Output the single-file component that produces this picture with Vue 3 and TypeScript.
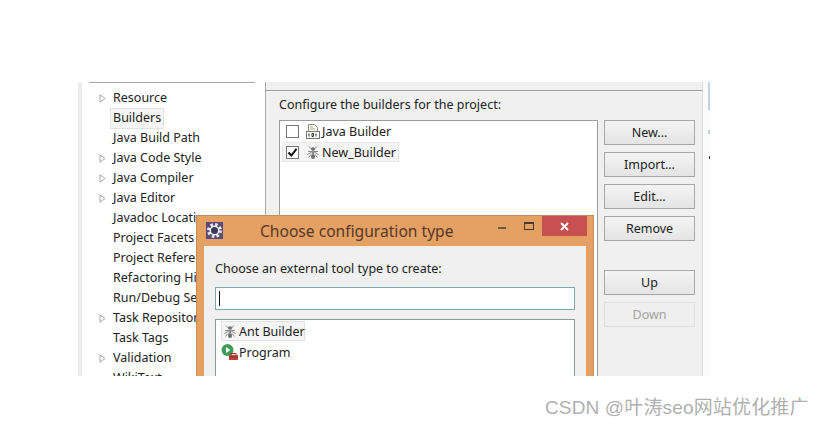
<script setup lang="ts">
const treeItems = [
  { label: 'Resource', arrow: true },
  { label: 'Builders', selected: true },
  { label: 'Java Build Path' },
  { label: 'Java Code Style', arrow: true },
  { label: 'Java Compiler', arrow: true },
  { label: 'Java Editor', arrow: true },
  { label: 'Javadoc Location' },
  { label: 'Project Facets' },
  { label: 'Project References' },
  { label: 'Refactoring History' },
  { label: 'Run/Debug Settings' },
  { label: 'Task Repository', arrow: true },
  { label: 'Task Tags' },
  { label: 'Validation', arrow: true },
  { label: 'WikiText' },
]
</script>

<template>
  <div class="page">
    <div class="shot">
      <aside class="sidebar">
        <ul class="tree">
          <li v-for="item in treeItems" :key="item.label" class="tree-row">
            <svg v-if="item.arrow" class="arrow" width="7" height="9" viewBox="0 0 7 9">
              <path d="M1 .8 6 4.5 1 8.2Z" fill="#fff" stroke="#a6a6a6" />
            </svg>
            <span v-else class="arrow" />
            <span class="tree-label" :class="{ selected: item.selected }">{{ item.label }}</span>
          </li>
        </ul>
      </aside>

      <main class="panel">
        <div class="panel-body">
          <p class="caption">Configure the builders for the project:</p>
          <div class="panel-row">
            <div class="builders">
              <div class="builder">
                <span class="check" />
                <svg class="icon" width="14" height="15" viewBox="0 0 14 15">
                  <path d="M2.5 .5h6l3 3v4h-9z" fill="#fff" stroke="#8a8a7a" />
                  <path d="M4 3h3M4 5h5" stroke="#b5a96a" />
                  <rect x=".5" y="7.5" width="13" height="7" fill="#fff" stroke="#77776c" />
                  <path d="M3 9.5v3M6 9.5v3h1.500v-3zM10 9.500v3" stroke="#333" fill="none" />
                </svg>
                <span>Java Builder</span>
              </div>
              <div class="builder active">
                <span class="check">
                  <svg width="11" height="11" viewBox="0 0 11 11">
                    <path d="M1.500 5.500 4.300 8.500 9.500 1.800" fill="none" stroke="#111" stroke-width="2" />
                  </svg>
                </span>
                <svg class="icon ant" width="14" height="15" viewBox="0 0 14 15">
                  <g stroke="#8c8c8c" fill="none">
                    <path d="M3 1.500 5.500 4M11 1.500 8.500 4M2 6.500h10M2.500 12.500 5 9.500M11.500 12.500 9 9.500M1.500 9.500 5 7.500M12.500 9.500 9 7.500" />
                  </g>
                  <ellipse cx="7" cy="4" rx="2" ry="1.800" fill="#6e6e6e" />
                  <ellipse cx="7" cy="7.500" rx="1.600" ry="1.800" fill="#8a8a8a" />
                  <ellipse cx="7" cy="11.500" rx="2" ry="2.500" fill="#6e6e6e" />
                </svg>
                <span>New_Builder</span>
              </div>
            </div>
            <div class="actions">
              <button class="btn">New...</button>
              <button class="btn">Import...</button>
              <button class="btn">Edit...</button>
              <button class="btn">Remove</button>
              <button class="btn up">Up</button>
              <button class="btn" disabled>Down</button>
            </div>
          </div>
        </div>
        <div class="edge">
          <span class="edge-blue" />
          <span class="edge-blue short" />
          <span class="edge-dot" />
        </div>
      </main>

      <section class="dialog">
        <header class="titlebar">
          <svg class="gear" width="17" height="17" viewBox="0 0 17 17">
            <rect width="17" height="17" fill="#5a4a78" />
            <circle cx="8.500" cy="8.500" r="6" fill="none" stroke="#e8e8e8" stroke-width="3" stroke-dasharray="2.500 2.200" />
            <circle cx="8.500" cy="8.500" r="5" fill="#f0f0f0" />
            <circle cx="8.500" cy="8.500" r="3.500" fill="#3c3a5c" />
          </svg>
          <h1 class="title">Choose configuration type</h1>
          <div class="win-buttons">
            <span class="win-btn"><i class="min" /></span>
            <span class="win-btn"><i class="max" /></span>
            <span class="win-btn close">
              <svg width="9" height="9" viewBox="0 0 9 9">
                <path d="M1 1 8 8M8 1 1 8" stroke="#fff" stroke-width="1.800" />
              </svg>
            </span>
          </div>
        </header>
        <div class="dialog-body">
          <label class="prompt">Choose an external tool type to create:</label>
          <div class="filter"><i class="caret" /></div>
          <div class="types">
            <div class="type">
              <svg class="icon" width="14" height="15" viewBox="0 0 14 15">
                <g stroke="#8c8c8c" fill="none">
                  <path d="M3 1.500 5.500 4M11 1.500 8.500 4M2 6.500h10M2.500 12.500 5 9.500M11.500 12.500 9 9.500M1.500 9.500 5 7.500M12.500 9.500 9 7.500" />
                </g>
                <ellipse cx="7" cy="4" rx="2" ry="1.800" fill="#6e6e6e" />
                <ellipse cx="7" cy="7.500" rx="1.600" ry="1.800" fill="#8a8a8a" />
                <ellipse cx="7" cy="11.500" rx="2" ry="2.500" fill="#6e6e6e" />
              </svg>
              <span>Ant Builder</span>
            </div>
            <div class="type plain">
              <svg class="icon program" width="17" height="16" viewBox="0 0 17 16">
                <circle cx="6.500" cy="6" r="6" fill="#3f9d5a" />
                <path d="M5 3 9.300 6 5 9Z" fill="#fff" />
                <path d="M8 11h9v5H8z" fill="#c8423c" />
                <path d="M10 11V9.500h5V11M8 13h9" fill="none" stroke="#8e2a28" />
              </svg>
              <span>Program</span>
            </div>
          </div>
        </div>
      </section>
    </div>
    <div class="watermark">CSDN @叶涛seo网站优化推广</div>
  </div>
</template>

<style>
html,
body {
  margin: 0;
  background: #fff;
}
</style>

<style scoped>
.page {
  position: relative;
  width: 824px;
  height: 426px;
  padding: 82px 114px 50px 78px;
  box-sizing: border-box;
  overflow: hidden;
  background: #fff;
  font-family: "Noto Sans", "Noto Sans CJK SC", sans-serif;
  font-size: 12.500px;
  color: #222;
}

.shot {
  position: relative;
  display: flex;
  height: 100%;
  overflow: hidden;
}

.sidebar {
  width: 188px;
  flex: none;
  box-sizing: border-box;
  border-left: 4px solid #ececec;
  border-right: 1px solid #a9a9a9;
  background: #fff;
}

.tree {
  list-style: none;
  margin: 0 0 0 7px;
  padding: 5px 0 0;
  width: 166px;
  border-top: 1px solid #a8a8a8;
}

.tree-row {
  display: flex;
  align-items: center;
  height: 20px;
  white-space: nowrap;
}

.arrow {
  display: block;
  width: 7px;
  height: 9px;
  margin-left: 10px;
  margin-right: 7px;
  flex: none;
}

.tree-label {
  padding: 0 2px 1px 2px;
  line-height: 18px;
  border: 1px solid transparent;
  margin-left: -3px;
}

.tree-label.selected {
  background: #f5f5f5;
  border-color: #e2e2e2;
}

.panel {
  flex: 1;
  display: flex;
  min-width: 0;
  background: #f0f0f0;
  padding-top: 8px;
}

.panel-body {
  flex: 1;
  min-width: 0;
  border-top: 1px solid #a0a0a0;
  padding: 5px 7px 0 13px;
}

.caption {
  margin: 0 0 6px;
  line-height: 18px;
}

.panel-row {
  display: flex;
  gap: 6px;
}

.builders {
  flex: 1;
  height: 280px;
  background: #fff;
  border: 1px solid #9c9c9c;
  padding: 0 2px;
  box-sizing: border-box;
}

.builder {
  display: flex;
  align-items: center;
  height: 20px;
  width: 117px;
  padding-left: 3px;
  box-sizing: border-box;
  border: 1px solid transparent;
  white-space: nowrap;
  margin-bottom: 1px;
}

.builder.active {
  background: #f5f5f5;
  border-color: #e6e6e6;
}

.check {
  display: flex;
  align-items: center;
  justify-content: center;
  width: 11px;
  height: 11px;
  margin-right: 7px;
  flex: none;
  background: #fff;
  border: 1px solid #777;
}

.icon {
  flex: none;
  margin-right: 2px;
}

.actions {
  display: flex;
  flex-direction: column;
  width: 91px;
  flex: none;
  gap: 7px;
}

.btn {
  height: 25px;
  box-sizing: border-box;
  padding: 0;
  font: inherit;
  color: #222;
  border: 1px solid #a8a8a8;
  background: linear-gradient(#f4f4f4, #e4e4e4);
}

.btn.up {
  margin-top: 22px;
}

.btn:disabled {
  color: #a3a3a3;
  background: #efefef;
  border-color: #e0e0e0;
}

.edge {
  width: 8px;
  flex: none;
  box-sizing: border-box;
  display: flex;
  flex-direction: column;
  align-items: flex-end;
  border-left: 1px solid #dadada;
  background: #fbfbfb;
  margin-top: -8px;
}

.edge-blue {
  display: block;
  width: 2px;
  height: 28px;
  background: #c3d2e4;
}

.edge-blue.short {
  margin-top: 20px;
  height: 4px;
  background: #c9cfd8;
}

.edge-dot {
  display: block;
  width: 1px;
  height: 3px;
  margin-top: 22px;
  background: #333;
}

.dialog {
  position: absolute;
  left: 118px;
  top: 133px;
  width: 398px;
  height: 200px;
  box-sizing: border-box;
  padding: 0 7px 8px;
  background: #e5a064;
  border: 1px solid #c88a56;
  display: flex;
  flex-direction: column;
}

.titlebar {
  display: flex;
  align-items: flex-start;
  height: 30px;
  flex: none;
}

.gear {
  margin-top: 6px;
  margin-left: 2px;
}

.title {
  margin: 5px 0 0 37px;
  font-weight: 400;
  font-size: 15.600px;
  line-height: 20px;
  color: #54392a;
  white-space: nowrap;
}

.win-buttons {
  display: flex;
  margin-left: auto;
  margin-right: -1px;
}

.win-btn {
  display: flex;
  align-items: center;
  justify-content: center;
  width: 27px;
  height: 20px;
}

.win-btn.close {
  width: 45px;
  background: #c75050;
}

.min {
  display: block;
  width: 8px;
  height: 2px;
  margin-top: 3px;
  background: #6d5a4c;
}

.max {
  display: block;
  width: 8px;
  height: 5px;
  border: 1px solid #4a3a2c;
  border-top-width: 2px;
}

.dialog-body {
  flex: 1;
  background: #f0f0f0;
  padding: 14px 11px 0;
  min-height: 0;
}

.prompt {
  display: block;
  line-height: 18px;
}

.filter {
  height: 23px;
  margin-top: 9px;
  box-sizing: border-box;
  background: #fff;
  border: 1px solid #7fa8a8;
  padding: 3px 0 0 3px;
}

.caret {
  display: block;
  width: 1px;
  height: 15px;
  background: #111;
}

.types {
  height: 110px;
  margin-top: 9px;
  box-sizing: border-box;
  background: #fff;
  border: 1px solid #8b9a9a;
  padding: 1px 5px;
}

.type {
  display: flex;
  align-items: center;
  width: 84px;
  height: 20px;
  box-sizing: border-box;
  background: #f5f5f5;
  border: 1px solid #e2e2e2;
  padding-left: 1px;
  white-space: nowrap;
}

.type.plain {
  background: none;
  border-color: transparent;
  margin-top: 1px;
  padding-left: 0;
}

.icon.program {
  margin-right: 1px;
  margin-left: -1px;
}

.watermark {
  position: absolute;
  left: 545px;
  top: 398px;
  font-family: "Liberation Sans", "Noto Sans CJK SC", sans-serif;
  font-size: 19px;
  letter-spacing: 0.15px;
  line-height: 20px;
  color: #b0b0b0;
  white-space: nowrap;
}
</style>
